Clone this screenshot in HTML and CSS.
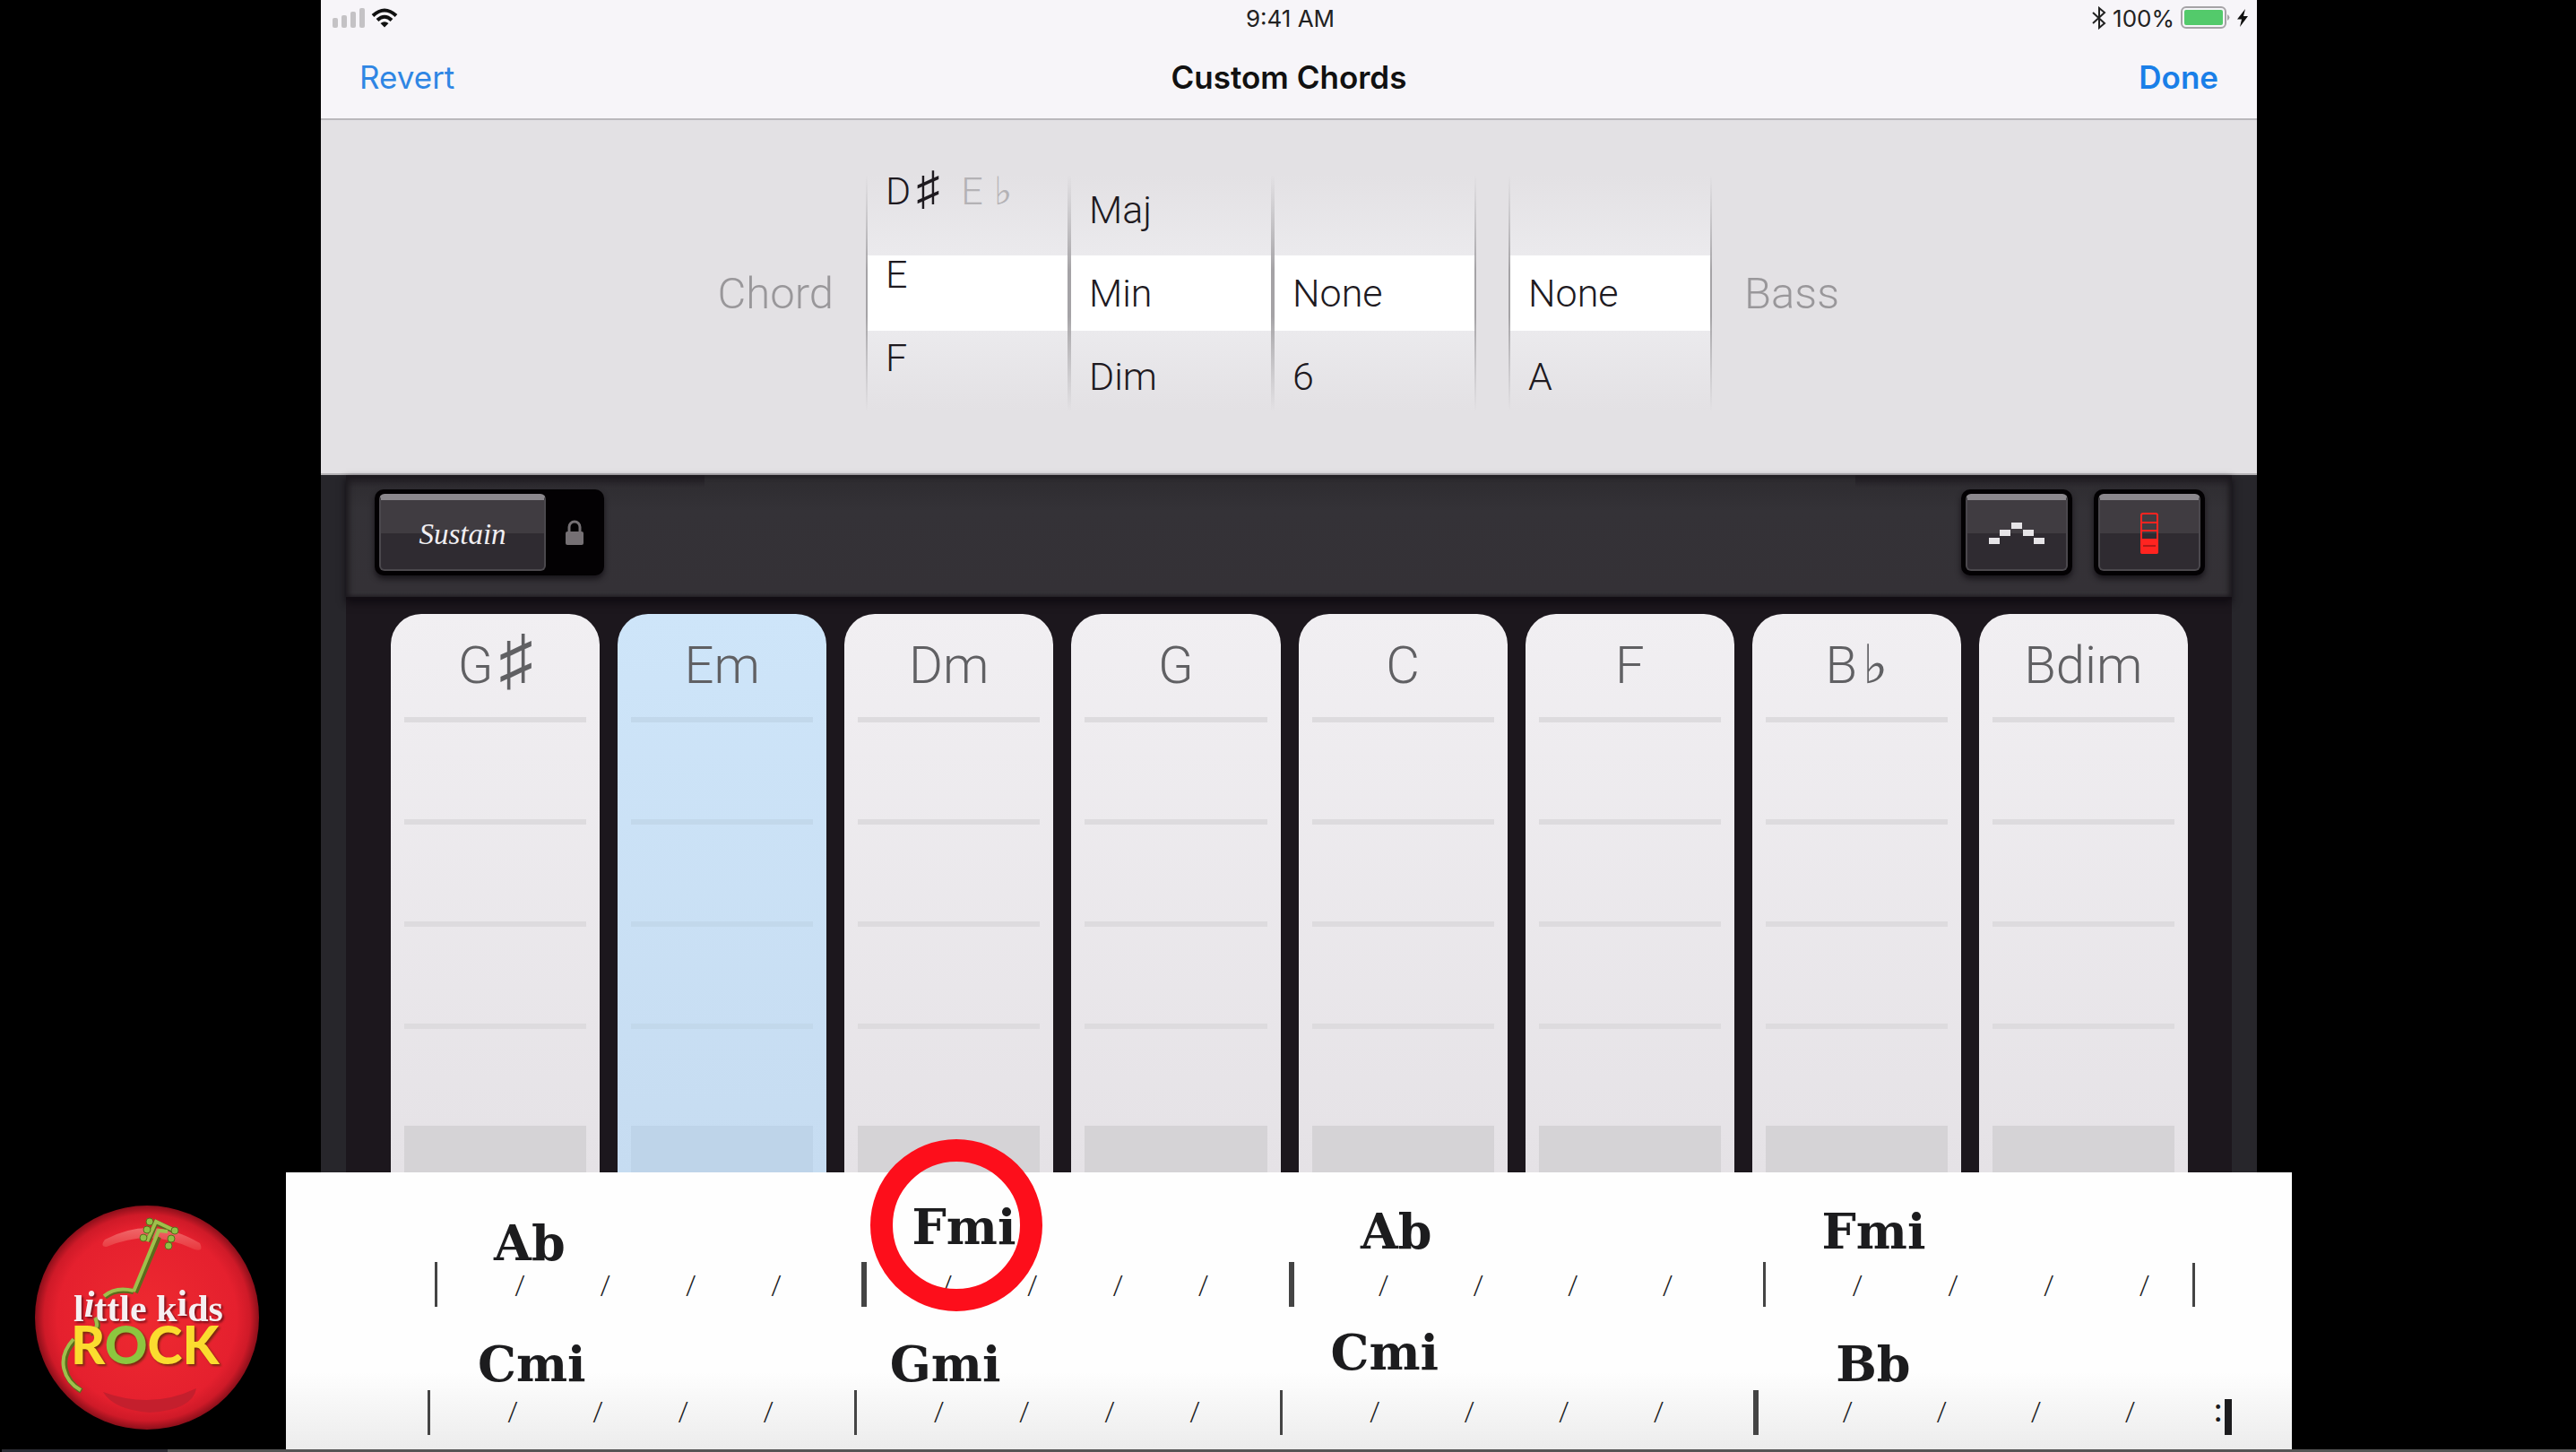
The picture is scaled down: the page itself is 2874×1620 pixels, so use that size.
FILE: index.html
```html
<!DOCTYPE html>
<html lang="en">
<head>
    <meta charset="UTF-8">
    <meta name="viewport" content="width=device-width, initial-scale=1.0">
    <title>Custom Chords</title>
    <link rel="stylesheet" href="styles.css">
</head>
<body>
    <main class="tablet">
        <header class="header">
            <div class="status-bar">
                <div class="status-left">
                    <svg width="36" height="22" viewBox="0 0 36 22" fill="#c4c2c5">
                        <rect x="0" y="11" width="6" height="11" rx="2"/>
                        <rect x="10" y="8" width="6" height="14" rx="2"/>
                        <rect x="20" y="4" width="6" height="18" rx="2"/>
                        <rect x="30" y="0" width="6" height="22" rx="2"/>
                    </svg>
                    <svg width="30" height="22" viewBox="0 0 30 22" fill="none" stroke="#111" stroke-width="4">
                        <path d="M2 8.500Q15 -3.500 28 8.500"/>
                        <path d="M7 13.500Q15 6 23 13.500"/>
                        <path d="M15 21.500L10.500 17Q15 13.500 19.500 17Z" fill="#111" stroke="none"/>
                    </svg>
                </div>
                <span class="time">9:41 AM</span>
                <div class="status-right">
                    <svg width="16" height="26" viewBox="0 0 16 26" fill="none" stroke="#222" stroke-width="2">
                        <path d="M1 7L14 19L8 24V2L14 7L1 19"/>
                    </svg>
                    <span>100%</span>
                    <svg width="56" height="26" viewBox="0 0 56 26">
                        <rect x="1" y="1" width="49" height="23" rx="5" fill="none" stroke="#a5a3a6" stroke-width="2"/>
                        <rect x="4" y="4" width="43" height="17" rx="2" fill="#53ca6b"/>
                        <path d="M52 9q5 3.500 0 7z" fill="#a5a3a6"/>
                    </svg>
                    <svg width="12" height="20" viewBox="0 0 12 20"><path d="M9 0L0 11.500H5L3 20L12 8H7Z" fill="#111"/></svg>
                </div>
            </div>
            <nav class="nav">
                <button class="nav-button">Revert</button>
                <h1>Custom Chords</h1>
                <button class="nav-button done">Done</button>
            </nav>
        </header>

        <section class="chord-editor">
            <span class="side-label label-chord" id="chord-label">Chord</span>
            <div class="wheels" role="group" aria-labelledby="chord-label">
                <ul class="wheel between-rows" role="listbox" aria-label="Root">
                    <li role="option">D<span class="sharp">♯</span><span class="alt">E<span class="flat">♭</span></span></li>
                    <li role="option" aria-selected="true">E</li>
                    <li role="option">F</li>
                </ul>
                <ul class="wheel" role="listbox" aria-label="Quality">
                    <li role="option">Maj</li>
                    <li role="option" aria-selected="true">Min</li>
                    <li role="option">Dim</li>
                </ul>
                <ul class="wheel" role="listbox" aria-label="Extension">
                    <li></li>
                    <li role="option" aria-selected="true">None</li>
                    <li role="option">6</li>
                </ul>
            </div>
            <div class="wheels" role="group" aria-labelledby="bass-label">
                <ul class="wheel" role="listbox" aria-label="Bass note">
                    <li></li>
                    <li role="option" aria-selected="true">None</li>
                    <li role="option">A</li>
                </ul>
            </div>
            <span class="side-label" id="bass-label">Bass</span>
        </section>

        <section class="instrument">
            <div class="toolbar">
                <div class="sustain">
                    <button class="hardware sustain-button">Sustain</button>
                    <button class="lock" aria-label="Lock sustain">
                        <svg width="20" height="28" viewBox="0 0 20 28">
                            <path d="M4 14V8a6 6 0 0 1 12 0v6" fill="none" stroke="#757074" stroke-width="3"/>
                            <rect y="13" width="20" height="15" rx="2" fill="#757074"/>
                        </svg>
                    </button>
                </div>
                <div class="tools">
                    <div class="socket">
                        <button class="hardware tool" aria-label="Arpeggiator">
                            <svg width="64" height="26" viewBox="0 0 64 26" fill="#e6e4e7">
                                <rect x="1" y="18" width="12" height="7"/>
                                <rect x="13" y="9" width="12" height="7"/>
                                <rect x="26" y="1" width="12" height="7"/>
                                <rect x="39" y="9" width="12" height="7"/>
                                <rect x="51" y="18" width="12" height="7"/>
                            </svg>
                        </button>
                    </div>
                    <div class="socket">
                        <button class="hardware tool" aria-label="Chord strips">
                            <svg width="22" height="48" viewBox="0 0 22 48">
                                <rect x="2" y="2" width="18" height="44" rx="2" fill="none" stroke="#ff2420" stroke-width="2"/>
                                <path d="M2 12H20M2 21H20" stroke="#ff2420" stroke-width="2"/>
                                <rect x="1" y="30" width="20" height="17" rx="2" fill="#ff2420"/>
                                <path d="M4 38H18" stroke="#b31816" stroke-width="2"/>
                            </svg>
                        </button>
                    </div>
                </div>
            </div>

            <div class="strips">
                <div class="strip"><h2>G<span class="sharp">♯</span></h2><i></i><i></i><i></i><i></i><b></b></div>
                <div class="strip active"><h2>Em</h2><i></i><i></i><i></i><i></i><b></b></div>
                <div class="strip"><h2>Dm</h2><i></i><i></i><i></i><i></i><b></b></div>
                <div class="strip"><h2>G</h2><i></i><i></i><i></i><i></i><b></b></div>
                <div class="strip"><h2>C</h2><i></i><i></i><i></i><i></i><b></b></div>
                <div class="strip"><h2>F</h2><i></i><i></i><i></i><i></i><b></b></div>
                <div class="strip"><h2>B<span class="flat">♭</span></h2><i></i><i></i><i></i><i></i><b></b></div>
                <div class="strip"><h2>Bdim</h2><i></i><i></i><i></i><i></i><b></b></div>
            </div>
        </section>
    </main>

    <footer class="bottom">
        <div class="brand">
            <svg width="250" height="250" viewBox="0 0 250 250" role="img" aria-label="little kids ROCK">
                <defs>
                    <radialGradient id="badge">
                        <stop offset="0" stop-color="#ee2a30"/>
                        <stop offset="0.800" stop-color="#e5202e"/>
                        <stop offset="0.920" stop-color="#cf1a28"/>
                        <stop offset="1" stop-color="#8a0f1a"/>
                    </radialGradient>
                    <linearGradient id="shine" x2="0" y2="1">
                        <stop offset="0" stop-color="#f0686a"/>
                        <stop offset="1" stop-color="#e9383e"/>
                    </linearGradient>
                </defs>
                <circle cx="125" cy="125" r="125" fill="url(#badge)"/>
                <path d="M78 38Q130 10 184 42Q189 52 178 49Q130 25 80 46Q72 46 78 38Z" fill="url(#shine)"/>
                <path d="M76 208Q130 228 180 204Q176 228 128 231Q88 228 76 208Z" fill="#c41f2d"/>
                <g fill="none" stroke="#5c6b1c" stroke-width="6">
                    <path d="M112 97L138 35M126 40L135 19L155 28"/>
                    <path d="M78 102Q90 92 110 96M68 126Q74 138 62 143M45 150C24 172 34 196 52 207"/>
                </g>
                <g fill="none" stroke="#9fc04c" stroke-width="4">
                    <path d="M110 96L138 28L148 29M125 40L135 18L154 27"/>
                    <path d="M77 101Q90 90 110 95M67 125Q73 137 61 142M43 149C22 172 33 196 51 206"/>
                </g>
                <g fill="#8fbf45" stroke="#5c6b1c">
                    <circle cx="128" cy="18" r="4"/><circle cx="125" cy="27" r="4"/><circle cx="121" cy="36" r="4"/>
                    <circle cx="156" cy="28" r="4"/><circle cx="152" cy="37" r="4"/><circle cx="149" cy="45" r="4"/>
                </g>
                <text class="brand-small" x="43" y="129">l<tspan dy="-5" font-style="italic">i</tspan><tspan dy="5">ttle k</tspan><tspan dy="-6">i</tspan><tspan dy="6">ds</tspan></text>
                <text class="brand-big" x="40" y="177">R<tspan fill="#8cc63f">O</tspan>CK</text>
            </svg>
        </div>

        <section class="sheet">
            <div class="line">
                <div class="measure">
                    <span class="chord indent-l">Ab</span>
                    <div class="beats"><span>/</span><span>/</span><span>/</span><span>/</span></div>
                </div>
                <div class="measure heavy">
                    <span class="chord indent-m lift-high">Fmi</span>
                    <div class="beats"><span>/</span><span>/</span><span>/</span><span>/</span></div>
                    <div class="ring"></div>
                </div>
                <div class="measure heavy">
                    <span class="chord indent-xl lift">Ab</span>
                    <div class="beats"><span>/</span><span>/</span><span>/</span><span>/</span></div>
                </div>
                <div class="measure last">
                    <span class="chord indent-l lift">Fmi</span>
                    <div class="beats wide"><span>/</span><span>/</span><span>/</span><span>/</span></div>
                </div>
            </div>
            <div class="line second">
                <div class="measure">
                    <span class="chord indent-m">Cmi</span>
                    <div class="beats"><span>/</span><span>/</span><span>/</span><span>/</span></div>
                </div>
                <div class="measure">
                    <span class="chord indent-s">Gmi</span>
                    <div class="beats"><span>/</span><span>/</span><span>/</span><span>/</span></div>
                </div>
                <div class="measure">
                    <span class="chord indent-m lift">Cmi</span>
                    <div class="beats"><span>/</span><span>/</span><span>/</span><span>/</span></div>
                </div>
                <div class="measure heavy repeat">
                    <span class="chord indent-xxl">Bb</span>
                    <div class="beats"><span>/</span><span>/</span><span>/</span><span>/</span></div>
                    <span class="repeat-dots">:</span>
                </div>
            </div>
        </section>
    </footer>
    <div class="edge"></div>
</body>
</html>
```
FILE: styles.css
```css
* {
    box-sizing: border-box;
}
body {
    margin: 0;
    padding-left: 2px;
    min-height: 100vh;
    display: flex;
    flex-direction: column;
    background: #000;
    font-family: Inter, "Liberation Sans", sans-serif;
}
button {
    border: 0;
    padding: 0;
    background: none;
    font: inherit;
}
h1, h2, ul {
    margin: 0;
    padding: 0;
    list-style: none;
}
svg {
    display: block;
}
.tablet {
    flex: 1;
    display: flex;
    flex-direction: column;
    width: 2160px;
    max-width: 100%;
    margin: 0 auto;
}

/* Status bar and title */
.header {
    height: 134px;
    background: #f7f5f9;
    border-bottom: 2px solid #bab8bc;
}
.status-bar {
    display: grid;
    grid-template-columns: 1fr auto 1fr;
    align-items: center;
    height: 40px;
    padding: 0 10px 0 13px;
    font-size: 26px;
    color: #222;
}
.status-left,
.status-right {
    display: flex;
    align-items: center;
    gap: 7px;
}
.status-right {
    justify-content: flex-end;
}
.nav {
    display: grid;
    grid-template-columns: 1fr auto 1fr;
    align-items: center;
    height: 92px;
    padding: 0 43px;
    font-size: 35px;
}
.nav h1 {
    font-size: 35px;
    font-weight: 600;
    color: #111;
}
.nav-button {
    justify-self: start;
    color: #2f86e4;
}
.done {
    justify-self: end;
    font-weight: 600;
    color: #1a7fe8;
}

/* Wheels */
.chord-editor {
    display: flex;
    justify-content: center;
    align-items: center;
    gap: 36px;
    height: 396px;
    padding-bottom: 8px;
    background: #e3e1e4;
    border-bottom: 2px solid #b5b3b6;
    font-family: Roboto, "Liberation Sans", sans-serif;
    font-weight: 300;
}
.side-label {
    width: 132px;
    font-size: 49px;
    color: #99979a;
}
.label-chord {
    text-align: right;
}
.wheels {
    display: flex;
    height: 262px;
    background: linear-gradient(#e3e1e4, #ebeaed 34%, #fff 34%, #fff 66%, #ebeaed 66%, #e3e1e4);
}
.wheel {
    width: 227px;
    height: 262px;
    padding-left: 20px;
    display: flex;
    flex-direction: column;
    justify-content: center;
    border: solid;
    border-width: 0 2px;
    border-image: linear-gradient(#a5a3a600, #a5a3a6 40%, #a5a3a6 60%, #a5a3a600) 1;
    font-size: 43px;
    color: #1e1a1f;
}
.wheel li {
    flex: none;
    height: 93px;
    line-height: 93px;
}
.between-rows {
    padding-bottom: 42px;
}
.sharp,
.flat {
    margin-left: 6px;
    font-family: "DejaVu Sans", sans-serif;
    font-weight: 200;
    line-height: 1;
}
.sharp {
    font-size: 52px;
}
.alt {
    margin-left: 24px;
    color: #b4b2b5;
}
.alt .flat {
    margin-left: 12px;
}

/* Instrument */
.instrument {
    flex: 1;
    display: flex;
    flex-direction: column;
    border: solid #27262b;
    border-width: 0 28px;
    background: #1c171d;
}
.toolbar {
    display: flex;
    justify-content: space-between;
    align-items: flex-start;
    height: 139px;
    padding: 16px 30px 0 32px;
    background:
        linear-gradient(#1f1b21, transparent) left top / 400px 14px no-repeat,
        linear-gradient(#1f1b21, transparent) right top / 420px 14px no-repeat,
        linear-gradient(#2d2b2f, #343237 30%, #343136 94%, #3d3a40);
    border-bottom: 3px solid #120d13;
    box-shadow: inset 3px 0 6px #1c191e, inset -3px 0 6px #1c191e, 0 4px 8px #100c12;
}
.sustain,
.socket {
    display: flex;
    height: 96px;
    padding: 5px;
    border-radius: 10px;
    background: #030103;
    box-shadow: 0 4px 6px #18151a;
}
.sustain {
    width: 256px;
}
.hardware {
    border: 2px solid #4b484d;
    border-top: 7px solid #8b888d;
    border-radius: 6px;
    background: linear-gradient(#403c41 48%, #2f2b31 48%);
}
.sustain-button {
    width: 186px;
    font-family: "Liberation Serif", serif;
    font-style: italic;
    font-size: 33px;
    color: #f0eef1;
}
.lock {
    flex: 1;
    display: flex;
    align-items: center;
    justify-content: center;
    padding-left: 4px;
}
.tools {
    display: flex;
    gap: 24px;
}
.tool {
    width: 114px;
    display: flex;
    align-items: center;
    justify-content: center;
    padding-bottom: 4px;
}
.strips {
    flex: 1;
    display: grid;
    grid-template-columns: repeat(8, 1fr);
    gap: 20px;
    padding: 16px 49px 0 50px;
}
.strip {
    display: flex;
    flex-direction: column;
    padding: 0 15px;
    border-radius: 34px 34px 0 0;
    background: linear-gradient(#f1eff2, #e5e2e6);
}
.strip h2 {
    height: 115px;
    line-height: 115px;
    text-align: center;
    font-family: Roboto, "Liberation Sans", sans-serif;
    font-weight: 300;
    font-size: 58px;
    color: #606063;
}
.strip .sharp {
    font-size: 76px;
}
.strip .flat {
    font-size: 60px;
}
.strip i {
    height: 114px;
    border-top: 6px solid #dddbde;
}
.strip b {
    flex: 1;
    background: #d5d3d6;
}
.active {
    background: linear-gradient(#cee5f9, #c6dcf1);
}
.active i {
    border-color: #c2d8eb;
}
.active b {
    background: #bed4e9;
}

/* Logo and chord sheet */
.bottom {
    display: grid;
    grid-template-columns: 317px 1fr 317px;
    height: 309px;
}
.brand {
    display: flex;
    align-items: flex-end;
    justify-content: center;
    padding: 0 0 22px 7px;
}
.brand-small {
    font-family: "Liberation Serif", serif;
    font-weight: bold;
    font-size: 42px;
    fill: #f6eff1;
    filter: drop-shadow(2px 2px 1px #7c1019);
}
.brand-big {
    font-family: Lato, sans-serif;
    font-weight: 900;
    font-size: 59px;
    fill: #fbdc2f;
    filter: drop-shadow(2px 2px 1px #7a2a10);
}
.sheet {
    background: linear-gradient(#fefefe 72%, #ececec);
    color: #1c1c1e;
}
.line {
    display: grid;
    grid-template-columns: 476fr 476fr 528fr 482fr;
    height: 150px;
    padding: 0 108px 0 166px;
}
.second {
    grid-template-columns: 475fr 475fr 527fr 533fr;
    height: 159px;
    padding: 0 67px 16px 158px;
}
.measure {
    position: relative;
    display: flex;
    flex-direction: column;
    justify-content: flex-end;
    background: linear-gradient(#444, #444) left bottom / 3px 50px no-repeat;
}
.heavy {
    background-size: 6px 50px;
}
.last {
    border-right: 3px solid;
    border-image: linear-gradient(transparent 67%, #444 67%) 1;
}
.chord {
    font-family: "DejaVu Serif", serif;
    font-weight: bold;
    font-size: 54px;
    line-height: 58px;
}
.indent-s {
    padding-left: 40px;
}
.indent-m {
    padding-left: 56px;
}
.indent-l {
    padding-left: 66px;
}
.indent-xl {
    padding-left: 80px;
}
.indent-xxl {
    padding-left: 92px;
}
.lift {
    padding-bottom: 13px;
}
.lift-high {
    padding-bottom: 18px;
}
.beats {
    display: grid;
    grid-template-columns: repeat(4, 1fr);
    padding: 0 10%;
    height: 36px;
    margin-bottom: 6px;
    font-family: Roboto, sans-serif;
    font-weight: 300;
    font-size: 30px;
    line-height: 36px;
    text-align: center;
}
.second .beats {
    margin: 6px 0 8px;
}
.wide {
    padding: 0 0 0 11%;
}
.ring {
    position: absolute;
    left: 10px;
    top: -37px;
    width: 192px;
    height: 192px;
    border: 25px solid #fd0e1b;
    border-radius: 50%;
}
.repeat {
    border-right: 8px solid;
    border-image: linear-gradient(transparent 72%, #1c1c1e 72%) 1;
}
.repeat-dots {
    position: absolute;
    right: 2px;
    bottom: 10px;
    font-size: 36px;
    line-height: 36px;
}
.edge {
    height: 3px;
    background: linear-gradient(90deg, #2c2c34 185px, #555 185px);
}
```
